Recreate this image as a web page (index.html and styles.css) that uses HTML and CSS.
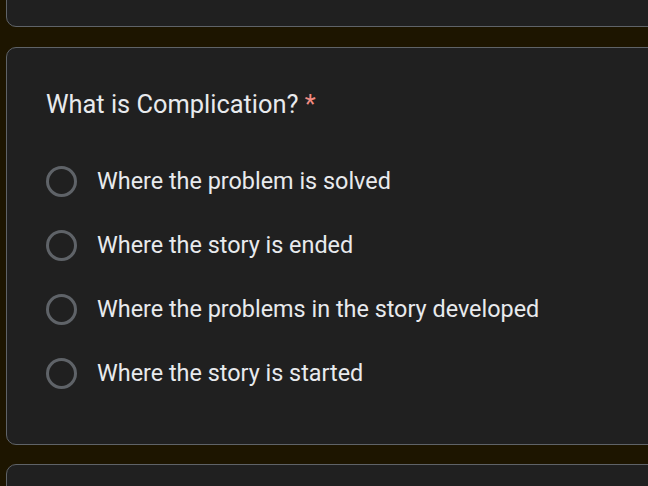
FILE: index.html
```html
<!DOCTYPE html>
<html lang="en">
<head>
    <meta charset="UTF-8">
    <meta name="viewport" content="width=device-width, initial-scale=1.0">
    <title>Quiz</title>
    <link rel="stylesheet" href="styles.css">
</head>
<body>

<div class="card card-prev"></div>

<div class="card question">
    <div class="question-title">What is Complication? <span class="required">*</span></div>
    <div class="options">
        <label class="option"><span class="radio"></span><span class="option-text">Where the problem is solved</span></label>
        <label class="option"><span class="radio"></span><span class="option-text">Where the story is ended</span></label>
        <label class="option"><span class="radio"></span><span class="option-text">Where the problems in the story developed</span></label>
        <label class="option"><span class="radio"></span><span class="option-text">Where the story is started</span></label>
    </div>
</div>

<div class="card card-next"></div>

</body>
</html>
```

FILE: styles.css
```css
body {
    margin: 0;
    background-color: #1d1500;
    font-family: Roboto, "Liberation Sans", Arial, sans-serif;
    overflow: hidden;
    height: 486px;
}
.card {
    width: 680px;
    margin-left: 6px;
    background-color: #202020;
    border: 1px solid #5f6368;
    border-radius: 10px;
    box-sizing: border-box;
}
.card-prev {
    height: 60px;
    margin-top: -33px;
}
.question {
    margin-top: 20px;
    height: 398px;
    padding: 40px 0 0 39px;
}
.question-title {
    font-size: 25.4px;
    color: #e8eaed;
    line-height: 32px;
}
.required {
    color: #f28b82;
}
.options {
    margin-top: 29px;
}
.option {
    display: flex;
    align-items: center;
    height: 64px;
}
.radio {
    width: 25px;
    height: 25px;
    border: 3px solid #5f6368;
    border-radius: 50%;
    margin-right: 20px;
    flex-shrink: 0;
}
.option-text {
    font-size: 23.4px;
    color: #e8eaed;
}
.card-next {
    margin-top: 19px;
    height: 60px;
}
```
